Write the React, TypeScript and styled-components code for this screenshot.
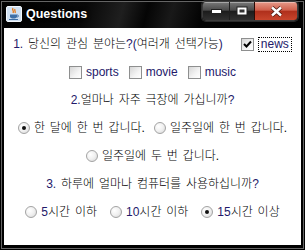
import styled, { createGlobalStyle } from "styled-components";

const GlobalStyle = createGlobalStyle`
  html, body {
    margin: 0;
    padding: 0;
    background: #fff;
  }
  body {
    font-family: "Liberation Sans", "Noto Sans CJK KR", sans-serif;
  }
`;

const Window = styled.div`
  width: 305px;
  height: 250px;
  box-sizing: border-box;
  display: flex;
  flex-direction: column;
  padding: 0 4px 5px 4px;
  background-color: #000;
  background-image: linear-gradient(
    105deg,
    #000 0%,
    #080808 28%,
    #1f1f1f 40%,
    #050505 48%,
    #191919 56%,
    #030303 66%,
    #000 100%
  );
  background-size: 100% 28px;
  background-repeat: no-repeat;
  box-shadow: inset 0 0 0 1px #000, inset 0 0 0 2px #646464;
  overflow: hidden;
`;

const TitleBar = styled.div`
  height: 28px;
  display: flex;
  align-items: center;
  padding-left: 2px;
`;

const Title = styled.span`
  margin-left: 4px;
  color: #fff;
  font-family: "Liberation Sans", sans-serif;
  font-weight: bold;
  font-size: 12.5px;
  text-shadow: 0 0 4px rgba(0, 0, 0, 0.9);
`;

const Controls = styled.div`
  margin-left: auto;
  margin-right: 3px;
  align-self: flex-start;
  margin-top: 1px;
  display: flex;
  height: 18px;
  border: 1px solid #3c3c3c;
  border-radius: 4px;
  overflow: hidden;
  box-shadow: 0 0 0 1px rgba(120, 120, 120, 0.35);
`;

const CtrlButton = styled.div<{ $w: number; $close?: boolean }>`
  width: ${(p) => p.$w}px;
  height: 100%;
  display: flex;
  align-items: center;
  justify-content: center;
  box-sizing: border-box;
  border-left: ${(p) => (p.$close ? "1px solid #2a0a05" : "1px solid #1e1e1e")};
  background: ${(p) =>
    p.$close
      ? "linear-gradient(#e69a8a 0%, #d0604c 45%, #b0301c 52%, #c8452c 100%)"
      : "linear-gradient(#7a7a7a 0%, #4a4a4a 45%, #1c1c1c 52%, #303030 100%)"};
  box-shadow: inset 0 1px 0 rgba(255, 255, 255, 0.35);
  &:first-child {
    border-left: none;
  }
`;

const Content = styled.div`
  flex: 1;
  background: #fff;
  display: flex;
  flex-direction: column;
  padding-top: 2px;
  font-size: 12px;
  color: #000;
`;

const Row = styled.div<{ $gap?: number }>`
  height: 28px;
  display: flex;
  align-items: center;
  justify-content: center;
  gap: ${(p) => p.$gap ?? 10}px;
  white-space: nowrap;
`;

const Text = styled.span`
  font-size: 12px;
  line-height: 14px;
  font-weight: 300;
  word-spacing: 1.5px;
`;

const Latin = styled.span`
  color: #23196a;
  font-size: 12px;
  font-weight: 400;
`;

const Choice = styled.span`
  display: inline-flex;
  align-items: center;
  gap: 4px;
`;

const Box = styled.span`
  width: 13px;
  height: 13px;
  box-sizing: border-box;
  border: 1px solid #8e8f8f;
  background: linear-gradient(135deg, #d6d6d6 0%, #f4f4f4 60%, #fff 100%);
  display: flex;
  align-items: center;
  justify-content: center;
`;

const Circle = styled.span`
  width: 12px;
  height: 12px;
  box-sizing: border-box;
  border-radius: 50%;
  border: 1px solid #a3a3a3;
  background: radial-gradient(circle at 35% 35%, #fff 0%, #f0f0f0 50%, #d4d4d4 100%);
  display: flex;
  align-items: center;
  justify-content: center;
`;

const Dot = styled.span`
  width: 4px;
  height: 4px;
  border-radius: 50%;
  background: #111;
`;

const Focus = styled.span`
  border: 1px dotted #000;
  padding: 0 2px;
  line-height: 13px;
`;

function JavaIcon() {
  return (
    <svg width="16" height="16" viewBox="0 0 16 16">
      <rect x="0.5" y="0.5" width="15" height="15" rx="1.5" fill="#cfe0f2" stroke="#f4f8fc" />
      <path d="M7 2 C5.5 4 8.5 5 7 7 M9 3 C8 4.5 10 5.5 9 7" stroke="#e76f00" strokeWidth="1.2" fill="none" />
      <path d="M4 8.5 H11 V10.5 C11 12 9.5 12.5 7.5 12.5 C5.5 12.5 4 12 4 10.5 Z" fill="#3e6fa6" />
      <path d="M11 9 C13 9 13 11 11 11" stroke="#3e6fa6" strokeWidth="1" fill="none" />
      <path d="M3 13.5 H12" stroke="#3e6fa6" strokeWidth="1" />
    </svg>
  );
}

function Check({ checked }: { checked?: boolean }) {
  return (
    <Box>
      {checked && (
        <svg width="9" height="9" viewBox="0 0 9 9">
          <path d="M1 4 L3.5 6.5 L8 1.5" stroke="#000" strokeWidth="2" fill="none" />
        </svg>
      )}
    </Box>
  );
}

function Radio({ checked }: { checked?: boolean }) {
  return <Circle>{checked && <Dot />}</Circle>;
}

export default function App() {
  return (
    <>
      <GlobalStyle />
      <Window>
        <TitleBar>
          <JavaIcon />
          <Title>Questions</Title>
          <Controls>
            <CtrlButton $w={26}>
              <svg width="11" height="5" viewBox="0 0 11 5">
                <rect x="0.5" y="0.5" width="10" height="4" fill="#fff" stroke="#222" />
              </svg>
            </CtrlButton>
            <CtrlButton $w={25}>
              <svg width="12" height="10" viewBox="0 0 12 10">
                <rect x="0.5" y="0.5" width="11" height="9" fill="#222" />
                <rect x="1.5" y="1.5" width="9" height="7" fill="#fff" />
                <rect x="3.5" y="3.5" width="5" height="3" fill="#333" />
              </svg>
            </CtrlButton>
            <CtrlButton $w={43} $close>
              <svg width="13" height="11" viewBox="0 0 13 11">
                <path d="M2 1.5 L11 9.5 M11 1.5 L2 9.5" stroke="#4a1a10" strokeWidth="4" />
                <path d="M2 1.5 L11 9.5 M11 1.5 L2 9.5" stroke="#fff" strokeWidth="2.4" />
              </svg>
            </CtrlButton>
          </Controls>
        </TitleBar>
        <Content>
          <Row $gap={18}>
            <Text>
              <Latin>1.</Latin> 당신의 관심 분야는<Latin>?(</Latin>여러개 선택가능<Latin>)</Latin>
            </Text>
            <Choice>
              <Check checked />
              <Focus>
                <Latin>news</Latin>
              </Focus>
            </Choice>
          </Row>
          <Row $gap={10}>
            <Choice>
              <Check />
              <Latin>sports</Latin>
            </Choice>
            <Choice>
              <Check />
              <Latin>movie</Latin>
            </Choice>
            <Choice>
              <Check />
              <Latin>music</Latin>
            </Choice>
          </Row>
          <Row>
            <Text>
              <Latin>2.</Latin>얼마나 자주 극장에 가십니까<Latin>?</Latin>
            </Text>
          </Row>
          <Row $gap={9}>
            <Choice>
              <Radio checked />
              <Text>한 달에 한 번 갑니다.</Text>
            </Choice>
            <Choice>
              <Radio />
              <Text>일주일에 한 번 갑니다.</Text>
            </Choice>
          </Row>
          <Row>
            <Choice>
              <Radio />
              <Text>일주일에 두 번 갑니다.</Text>
            </Choice>
          </Row>
          <Row>
            <Text>
              <Latin>3.</Latin> 하루에 얼마나 컴퓨터를 사용하십니까<Latin>?</Latin>
            </Text>
          </Row>
          <Row $gap={13}>
            <Choice>
              <Radio />
              <Text>
                <Latin>5</Latin>시간 이하
              </Text>
            </Choice>
            <Choice>
              <Radio />
              <Text>
                <Latin>10</Latin>시간 이하
              </Text>
            </Choice>
            <Choice>
              <Radio checked />
              <Text>
                <Latin>15</Latin>시간 이상
              </Text>
            </Choice>
          </Row>
        </Content>
      </Window>
    </>
  );
}
